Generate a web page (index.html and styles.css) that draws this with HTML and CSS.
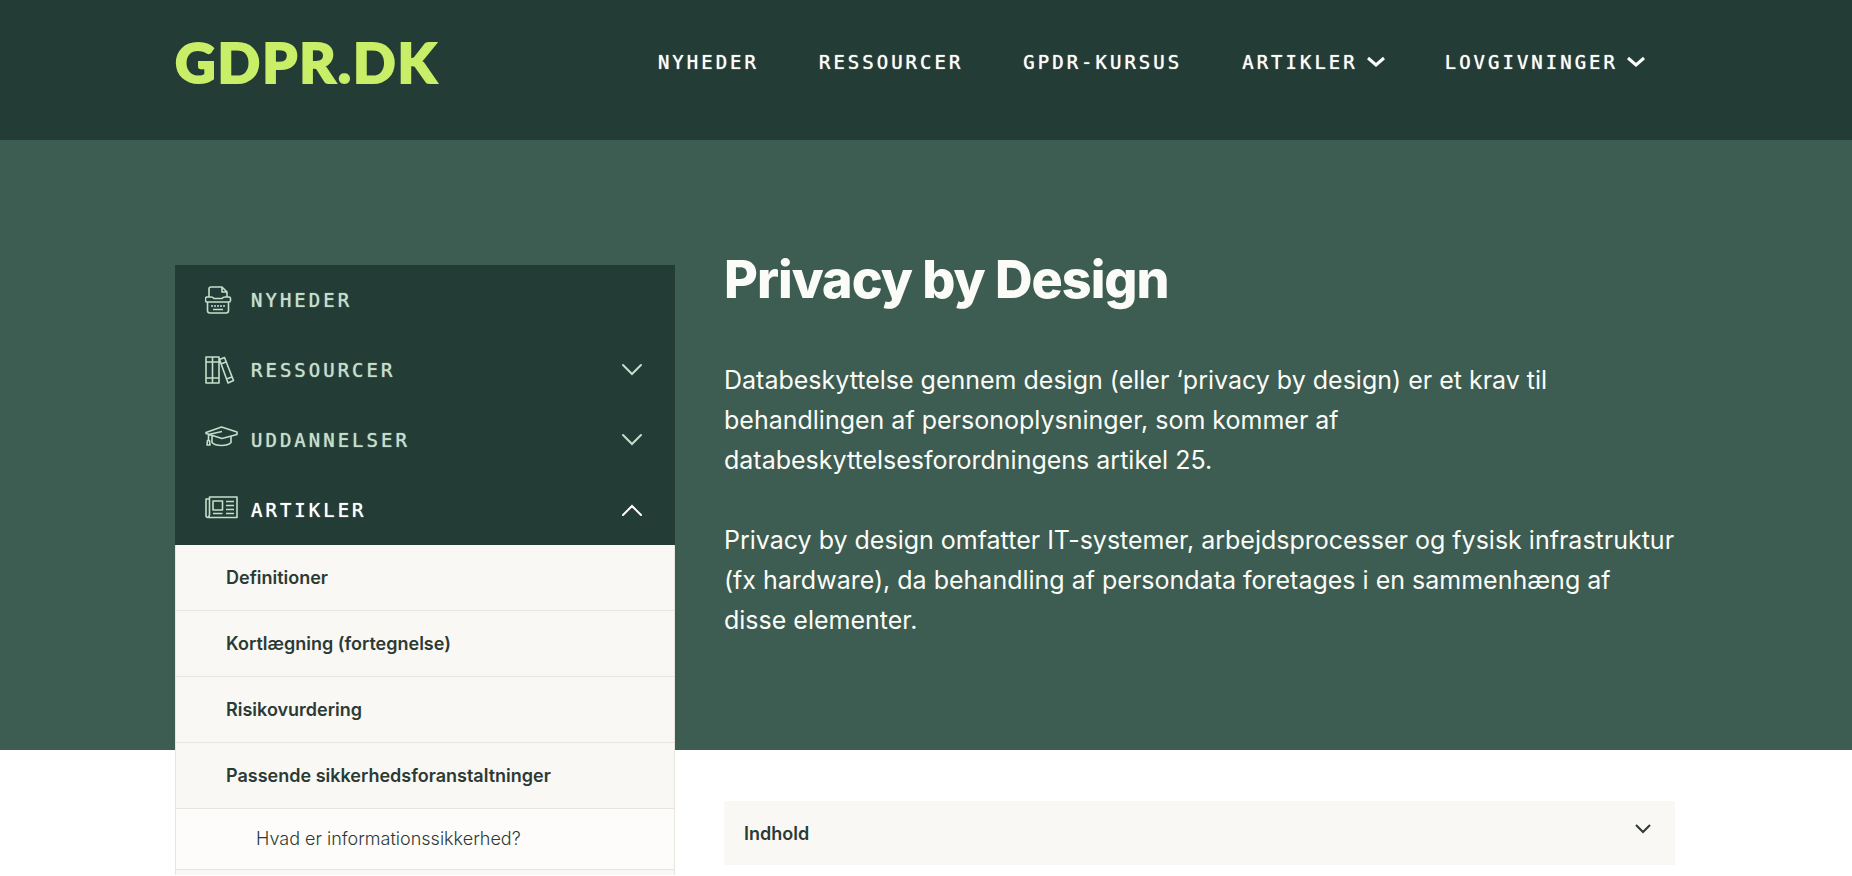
FILE: index.html
```html
<!DOCTYPE html>
<html lang="da">
<head>
  <meta charset="UTF-8" />
  <meta name="viewport" content="width=device-width, initial-scale=1.0" />
  <title>Privacy by Design - GDPR.DK</title>
  <link rel="stylesheet" href="styles.css">
</head>
<body>
  <header class="site-header">
    <div class="container header-inner">
      <a class="logo" href="#">GDPR.DK</a>
      <nav class="main-nav">
        <a href="#">NYHEDER</a>
        <a href="#">RESSOURCER</a>
        <a href="#">GPDR-KURSUS</a>
        <a class="has-menu" href="#">ARTIKLER
          <svg width="18" height="12" viewBox="0 0 18 12"><path d="M1 2l8 7 8-7" /></svg>
        </a>
        <a class="has-menu" href="#">LOVGIVNINGER
          <svg width="18" height="12" viewBox="0 0 18 12"><path d="M1 2l8 7 8-7" /></svg>
        </a>
      </nav>
    </div>
  </header>

  <main class="page">
    <div class="container columns">
      <aside class="sidebar">
        <nav>
          <a class="side-link" href="#">
            <svg class="icon" width="34" height="28" viewBox="0 0 34 28">
              <path d="M4 11V3q0-2 2-2h11l5 5v5M17 1v5h5M2 11h4q2 0 3 1.5h8q1-1.5 3-1.5h4q1.5 0 1.5 1.5v2q0 1.5-1.5 1.5H2q-1.5 0-1.5-1.5v-2Q.5 11 2 11zM2.5 16v8.5q0 2.5 2.5 2.5h16q2.5 0 2.5-2.5V16M8 23.5h10" />
              <path d="M6 20h15" stroke-dasharray="2 1" />
            </svg>
            NYHEDER
          </a>
          <button class="side-link" type="button">
            <svg class="icon" width="34" height="28" viewBox="0 0 34 28">
              <path d="M1 1h13v26H1zM7.5 1v26M1 6h13M1 22h13M14.5 3.5l5-2 9 23-5.500 2.5zM16 8l5-2M21.5 23l5.5-2" />
            </svg>
            RESSOURCER
            <svg class="chevron" width="22" height="14" viewBox="0 0 22 14"><path d="M2 2l9 9 9-9" /></svg>
          </button>
          <button class="side-link" type="button">
            <svg class="icon" width="34" height="28" viewBox="0 0 34 28">
              <path d="M1 6.5L16.5 1 32 6v2.5L17 12.5 6 9 1 7.5zM17 5.5L3.5 8.5v6M2.5 14.5h2l.5 4.5H2zM7 10v6.5q3 3 9.5 3t9.5-3V10.5" />
            </svg>
            UDDANNELSER
            <svg class="chevron" width="22" height="14" viewBox="0 0 22 14"><path d="M2 2l9 9 9-9" /></svg>
          </button>
          <button class="side-link active" type="button" aria-expanded="true">
            <svg class="icon" width="34" height="28" viewBox="0 0 34 28">
              <path d="M4.5 1H32v20.5H3Q1 21.5 1 19.5V3h3.5zM4.5 3v15.5q0 2-1.5 3M8 5h9.5v9H8zM21 5.5h8M21 9.5h8M21 13.5h8M8 17.5h9.5M21 17.5h8" />
            </svg>
            ARTIKLER
            <svg class="chevron" width="22" height="14" viewBox="0 0 22 14"><path d="M2 12l9-9 9 9" /></svg>
          </button>
          <ul class="submenu">
            <li><a href="#">Definitioner</a></li>
            <li><a href="#">Kortlægning (fortegnelse)</a></li>
            <li><a href="#">Risikovurdering</a></li>
            <li><a href="#">Passende sikkerhedsforanstaltninger</a></li>
            <li class="child"><a href="#">Hvad er informationssikkerhed?</a></li>
          </ul>
        </nav>
      </aside>

      <article class="content">
        <div class="intro">
          <h1>Privacy by Design</h1>
          <p>Databeskyttelse gennem design (eller ‘privacy by design) er et krav til behandlingen af personoplysninger, som kommer af databeskyttelsesforordningens artikel 25.</p>
          <p>Privacy by design omfatter IT-systemer, arbejdsprocesser og fysisk infrastruktur (fx hardware), da behandling af persondata foretages i en sammenhæng af disse elementer.</p>
        </div>
        <button class="toc" type="button">
          Indhold
          <svg width="16" height="10" viewBox="0 0 16 10"><path d="M1 1l7 7 7-7" /></svg>
        </button>
      </article>
    </div>
  </main>
</body>
</html>
```

FILE: styles.css
```css
* {
  box-sizing: border-box;
}

body {
  margin: 0;
  font-family: Inter, sans-serif;
  color: #2c3a34;
  background: #fff;
}

a {
  color: inherit;
  text-decoration: none;
}

button {
  border: none;
  text-align: left;
  cursor: pointer;
}

svg {
  fill: none;
  stroke: currentColor;
}

.container {
  max-width: 1502px;
  margin: 0 auto;
}

/* header */
.site-header {
  background: #243c36;
  padding: 32px 0 48px;
}

.header-inner {
  display: flex;
  align-items: center;
  justify-content: space-between;
  padding-right: 32px;
}

.logo {
  font-family: "Lato Black", Lato, sans-serif;
  font-weight: 900;
  font-size: 56px;
  line-height: 60px;
  letter-spacing: 2px;
  color: #c9ee67;
  -webkit-text-stroke: 2px #c9ee67;
}

.main-nav {
  display: flex;
  gap: 60px;
  font-family: "DejaVu Sans Mono", monospace;
  font-size: 19px;
  letter-spacing: 3px;
  text-shadow: 0 0 1px currentColor;
  color: #fcfdf8;
}

.has-menu {
  display: flex;
  align-items: center;
  gap: 9px;
}

.has-menu svg {
  stroke-width: 3;
}

/* the green band ends behind the two columns */
.page {
  background: linear-gradient(#3d5c52 610px, #fff 610px);
}

.columns {
  display: grid;
  grid-template-columns: 500px 1fr;
  column-gap: 49px;
  align-items: start;
  padding-right: 2px;
}

/* sidebar */
.sidebar {
  margin-top: 125px;
  background: #243c36;
}

.side-link {
  display: flex;
  align-items: center;
  gap: 12px;
  width: 100%;
  height: 70px;
  padding: 0 32px 0 30px;
  background: none;
  font-family: "DejaVu Sans Mono", monospace;
  font-size: 19px;
  letter-spacing: 3px;
  text-shadow: 0 0 1px currentColor;
  color: #c3dfcb;
}

.side-link.active {
  color: #fff;
}

.icon {
  color: #c3dfcb;
  stroke-width: 1.6;
  stroke-linejoin: round;
}

.chevron {
  margin-left: auto;
  stroke-width: 2;
  stroke-linecap: round;
}

.submenu {
  list-style: none;
  margin: 0;
  padding: 0 0 5px;
  background: #f9f8f4;
  border: 1px solid #e8e5e1;
  border-width: 0 1px;
}

.submenu li {
  border-bottom: 1px solid #e8e5e1;
}

.submenu a {
  display: block;
  padding: 0 50px;
  font-size: 18px;
  font-weight: 600;
  line-height: 65px;
}

.submenu .child {
  background: #fdfcfa;
}

.submenu .child a {
  padding-left: 80px;
  font-weight: 300;
  line-height: 60px;
}

/* content */
.intro {
  min-height: 610px;
  padding-top: 110px;
  color: #fbfcf7;
}

h1 {
  margin: 0 0 50px;
  font-size: 52px;
  font-weight: 800;
  line-height: 60px;
  letter-spacing: -1px;
}

.intro p {
  margin: 0 0 40px;
  font-size: 25px;
  line-height: 40px;
}

.toc {
  display: flex;
  align-items: center;
  justify-content: space-between;
  width: 100%;
  height: 64px;
  margin: 51px 0 11px;
  padding: 0 24px 0 20px;
  background: #f9f8f4;
  font-family: inherit;
  font-size: 18px;
  font-weight: 600;
  color: #2c3a34;
}

.toc svg {
  margin-bottom: 8px;
  stroke-width: 2;
}
```
